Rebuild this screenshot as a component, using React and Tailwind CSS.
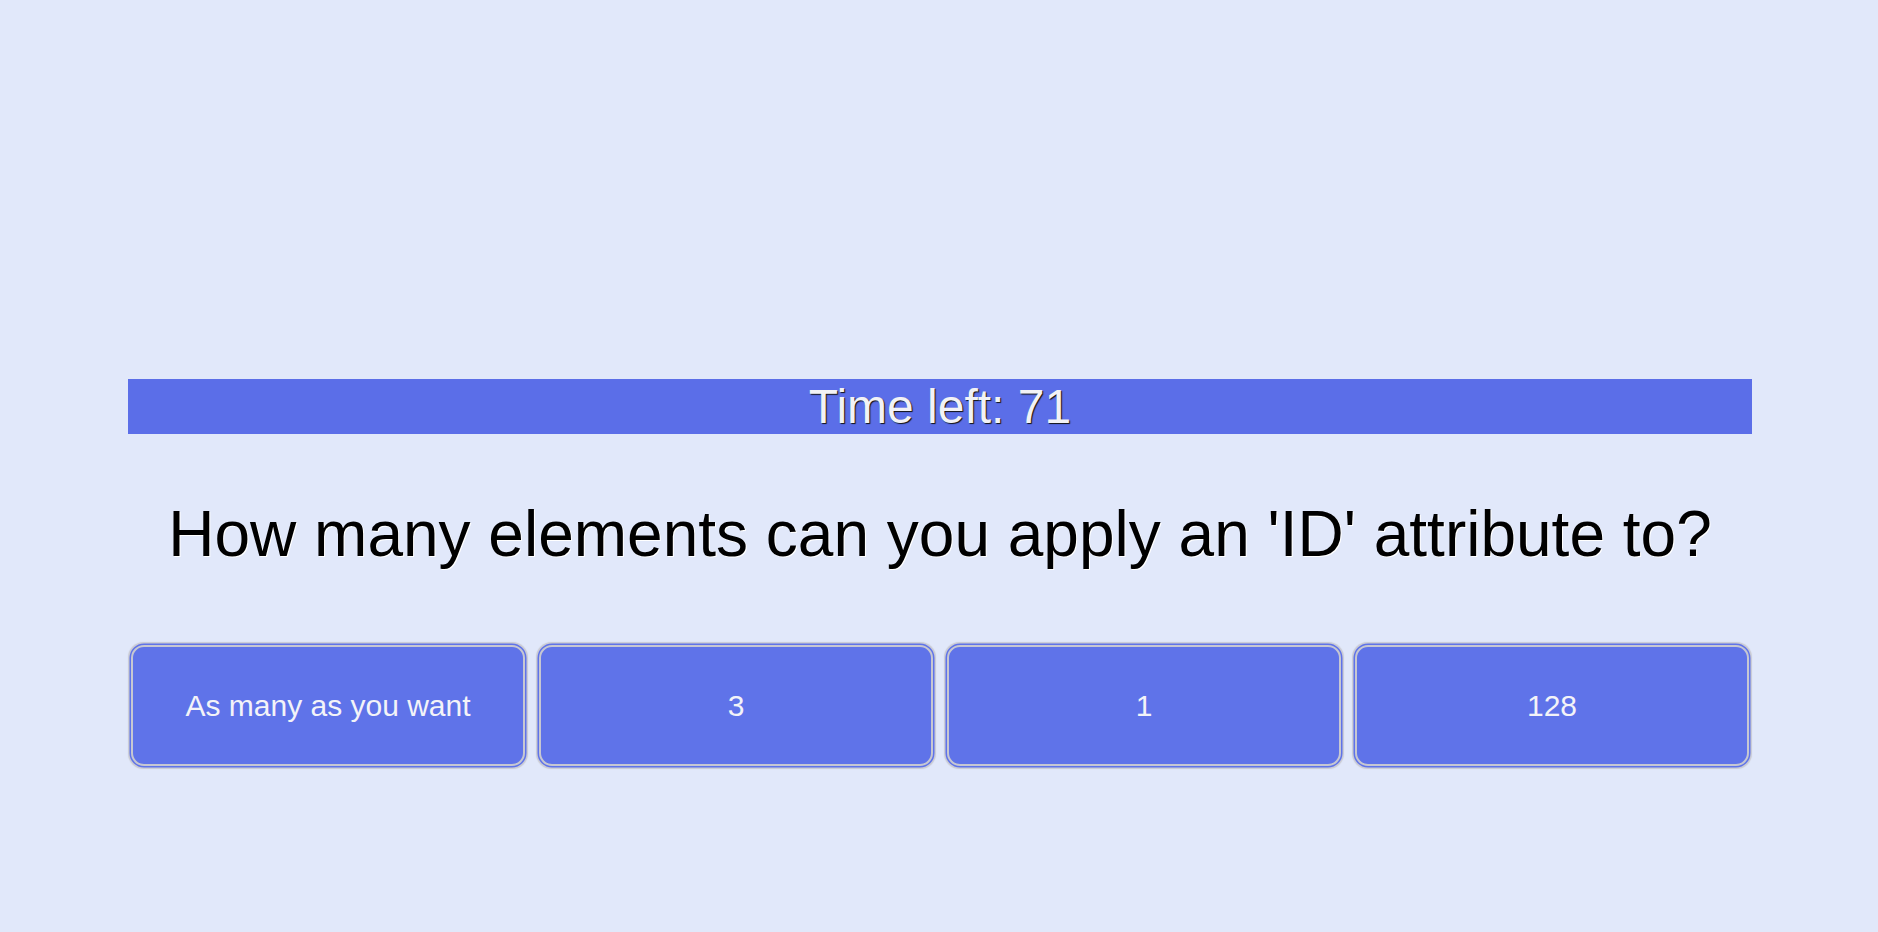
import React, { useState } from 'react';

const answers = ['As many as you want', '3', '1', '128'];

export default function App() {
    const [timeLeft] = useState(71);
    const [picked, setPicked] = useState(null);

    return (
        <div
            className="min-h-screen bg-[#e1e8fa]"
            style={{ fontFamily: '"Liberation Sans", Arial, Helvetica, sans-serif' }}
        >
            <div className="w-[1624px] ml-[128px] pt-[379px]">
                <div className="h-[55px] bg-[#5b6ee8] text-center text-[48px] leading-[55px] text-[#f2f2f6] [text-shadow:1px_1px_1px_#111]">
                    Time left: {timeLeft}
                </div>

                <h2 className="mt-[63px] text-center text-[64px] leading-[74px] text-black [text-shadow:1px_1px_0_#fff]">
                    How many elements can you apply an 'ID' attribute to?
                </h2>

                <div className="mt-[74px] grid grid-cols-4 gap-[14px] px-[3px]">
                    {answers.map((answer, i) => (
                        <button
                            key={answer}
                            type="button"
                            onClick={() => setPicked(i)}
                            className={`h-[121px] rounded-[13px] border-2 border-[#c6c7d2] bg-[#5f73e9] text-[30px] text-[#f3f3f8] shadow-[0_0_0_1.5px_#5f73e9,0_0_1px_2.5px_#c9cad3] ${picked === i ? 'brightness-95' : ''}`}
                        >
                            {answer}
                        </button>
                    ))}
                </div>
            </div>
        </div>
    );
}
